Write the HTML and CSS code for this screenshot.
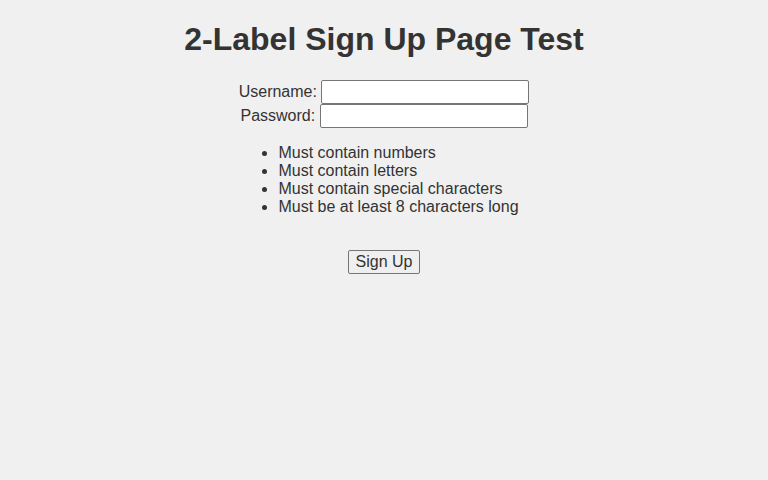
FILE: index.html
```html
<!DOCTYPE html>
<html lang="en">
<head>
<meta charset="utf-8">
<title>2-Label Sign Up Page Test</title>
<link rel="stylesheet" href="styles.css">
</head>
<body>
<h1 class="title">2-Label Sign Up Page Test</h1>
<form class="signup">
  <div class="row">
    <label class="label" for="username">Username:</label>
    <input class="field" type="text" id="username">
  </div>
  <div class="row">
    <label class="label" for="password">Password:</label>
    <input class="field" type="password" id="password">
  </div>
  <ul class="rules">
    <li>Must contain numbers</li>
    <li>Must contain letters</li>
    <li>Must contain special characters</li>
    <li>Must be at least 8 characters long</li>
  </ul>
  <div class="actions">
    <button class="btn" type="submit">Sign Up</button>
  </div>
</form>
</body>
</html>
```
FILE: styles.css
```css
html {
  background: #f0f0f0;
}
body {
  margin: 0;
  padding: 0 8px;
  font-family: "Liberation Sans", Arial, sans-serif;
  font-size: 16px;
  color: #333333;
  background: #f0f0f0;
}
.title {
  font-size: 32px;
  font-weight: bold;
  text-align: center;
  margin: 21.44px 0;
}
.signup {
  display: flex;
  flex-direction: column;
  align-items: center;
}
.row {
  display: flex;
  justify-content: center;
  align-items: center;
  gap: 4.4px;
}
.label {
  line-height: normal;
}
.field {
  box-sizing: content-box;
  width: 200px;
  height: 18px;
  padding: 2px 3px;
  border: 1px solid #767676;
  border-radius: 2px;
  background: #ffffff;
  font: inherit;
  margin: 0;
  outline: none;
}
.rules {
  margin: 16px 0;
  padding-left: 29px;
  width: fit-content;
}
.rules li {
  line-height: 18px;
}
.actions {
  padding-top: 18px;
}
.btn {
  font: inherit;
  color: #333333;
  background: #efefef;
  border: 1px solid #767676;
  border-radius: 2px;
  padding: 2px 7px;
  margin: 0;
  height: 24px;
  box-sizing: border-box;
  line-height: 18px;
}
```
